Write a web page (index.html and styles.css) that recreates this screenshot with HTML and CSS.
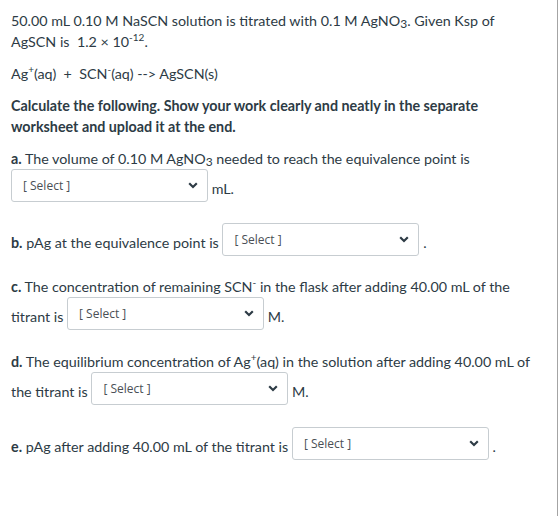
FILE: index.html
```html
<!DOCTYPE html>
<html>
<head>
<meta charset="utf-8">
<link rel="stylesheet" href="styles.css">
</head>
<body>
<div class="page">
  <p class="intro">50.00 mL 0.10 M NaSCN solution is titrated with 0.1 M AgNO<sub>3</sub>. Given Ksp of AgSCN is &nbsp;1.2 × 10<sup>-12</sup>.</p>
  <p>Ag<sup>+</sup>(aq) &nbsp;+ &nbsp;SCN<sup>-</sup>(aq) --&gt; AgSCN(s)</p>
  <p class="bold">Calculate the following. Show your work clearly and neatly in the separate worksheet and upload it at the end.</p>
  <p class="q"><b>a.</b> The volume of 0.10 M AgNO<sub>3</sub> needed to reach the equivalence point is <span class="sel"><span class="sel-text">[ Select ]</span><svg class="chev" width="10" height="7" viewBox="0 0 10 7"><path d="M1.2 1.3 L5 5 L8.8 1.3" fill="none" stroke="#2d3b45" stroke-width="2.2"/></svg></span> mL.</p>
  <p class="q"><b>b.</b> pAg at the equivalence point is <span class="sel"><span class="sel-text">[ Select ]</span><svg class="chev" width="10" height="7" viewBox="0 0 10 7"><path d="M1.2 1.3 L5 5 L8.8 1.3" fill="none" stroke="#2d3b45" stroke-width="2.2"/></svg></span> .</p>
  <p class="q"><b>c.</b> The concentration of remaining SCN<sup>-</sup> in the flask after adding 40.00 mL of the titrant is <span class="sel"><span class="sel-text">[ Select ]</span><svg class="chev" width="10" height="7" viewBox="0 0 10 7"><path d="M1.2 1.3 L5 5 L8.8 1.3" fill="none" stroke="#2d3b45" stroke-width="2.2"/></svg></span> M.</p>
  <p class="q"><b>d.</b> The equilibrium concentration of Ag<sup>+</sup>(aq) in the solution after adding 40.00 mL of the titrant is <span class="sel"><span class="sel-text">[ Select ]</span><svg class="chev" width="10" height="7" viewBox="0 0 10 7"><path d="M1.2 1.3 L5 5 L8.8 1.3" fill="none" stroke="#2d3b45" stroke-width="2.2"/></svg></span> M.</p>
  <p class="q last"><b>e.</b> pAg after adding 40.00 mL of the titrant is <span class="sel"><span class="sel-text">[ Select ]</span><svg class="chev" width="10" height="7" viewBox="0 0 10 7"><path d="M1.2 1.3 L5 5 L8.8 1.3" fill="none" stroke="#2d3b45" stroke-width="2.2"/></svg></span> .</p>
</div>
</body>
</html>
```

FILE: styles.css
```css
html, body {
  margin: 0;
  padding: 0;
  background: #fff;
}
.page {
  box-sizing: border-box;
  width: 558px;
  min-height: 516px;
  border-right: 1px solid #a4a4a4;
  padding: 10px 17px 0 11px;
  font-family: Lato, "Liberation Sans", sans-serif;
  font-size: 14.3px;
  line-height: 21px;
  color: #2d3b45;
}
p {
  margin: 0 0 11px 0;
}
.q {
  margin-bottom: 20.5px;
}
.q.last {
  margin-top: 22px;
}
.bold {
  font-weight: bold;
}
sub {
  font-size: 12px;
  line-height: 0;
  vertical-align: -2px;
}
sup {
  font-size: 10px;
  line-height: 0;
}
.sel {
  display: inline-flex;
  align-items: center;
  justify-content: space-between;
  box-sizing: border-box;
  width: 197px;
  height: 33px;
  border: 1px solid #c7cdd1;
  border-radius: 3px;
  padding: 0 9px 0 11px;
  vertical-align: 3.5px;
  font-family: "Open Sans", Lato, sans-serif;
  font-size: 12px;
  color: #4a4f55;
  background: #fff;
}
.chev {
  display: block;
}
```
